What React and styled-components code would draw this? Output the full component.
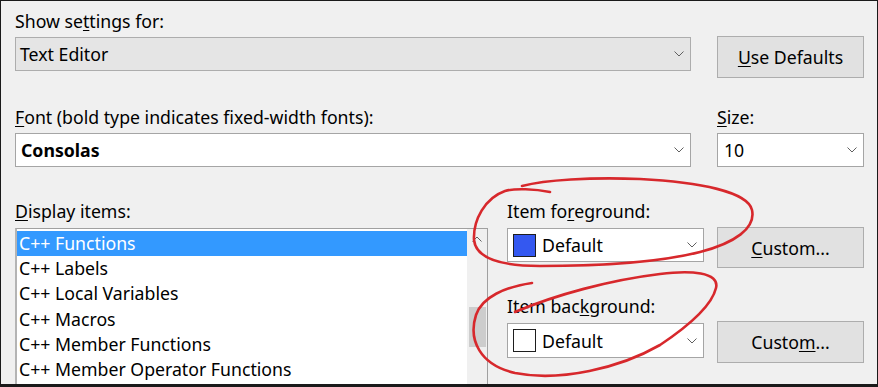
import React from 'react';
import styled, { createGlobalStyle } from 'styled-components';

const GlobalStyle = createGlobalStyle`
  html, body {
    margin: 0;
    padding: 0;
    background: #f0f0f0;
  }
  body {
    font-family: "Noto Sans", "Open Sans", sans-serif;
  }
`;

const Window = styled.div`
  position: relative;
  width: 878px;
  height: 387px;
  box-sizing: border-box;
  border: 1px solid #1a1a1a;
  border-bottom-width: 3px;
  background: #f0f0f0;
  overflow: hidden;
  padding: 7px 0 0 14px;
  font-size: 17.7px;
  color: #000;
`;

const TopGrid = styled.div`
  display: grid;
  grid-template-columns: 676px 147px;
  column-gap: 26px;
  row-gap: 2px;
  align-items: start;
`;

const Label = styled.div`
  height: 26px;
  line-height: 26px;
  white-space: nowrap;
  margin-top: ${p => p.$top || 0}px;
`;

const Key = styled.u`
  text-underline-offset: 2px;
  text-decoration-thickness: 1px;
`;

const Combo = styled.div`
  box-sizing: border-box;
  display: flex;
  align-items: center;
  height: ${p => p.$h || 34}px;
  margin-top: ${p => p.$top || 0}px;
  padding: 0 6px 0 ${p => p.$pad || 4}px;
  background: ${p => (p.$gray ? '#e5e5e5' : '#fff')};
  border: 1px solid ${p => (p.$gray ? '#adadad' : '#a5a5a5')};
  font-weight: ${p => (p.$bold ? 700 : 400)};
  white-space: nowrap;
`;

const ComboText = styled.span`
  flex: 1;
`;

const Swatch = styled.span`
  box-sizing: border-box;
  width: 23px;
  height: 23px;
  margin-right: 6px;
  border: 1px solid #1e1e1e;
  background: ${p => p.$color};
`;

const Button = styled.div`
  box-sizing: border-box;
  display: flex;
  align-items: center;
  justify-content: center;
  height: ${p => p.$h || 42}px;
  margin-top: ${p => p.$top || 0}px;
  background: #e1e1e1;
  border: 1px solid #adadad;
  white-space: nowrap;
`;

const Bottom = styled.div`
  display: flex;
  margin-top: 31px;
  gap: 19px;
`;

const LeftCol = styled.div`
  display: flex;
  flex-direction: column;
  width: 473px;
`;

const List = styled.div`
  display: flex;
  margin-top: 4px;
  height: 170px;
  box-sizing: border-box;
  border: 1px solid #a0a0a0;
  border-left: 2px solid #b4b4b4;
  background: #fff;
`;

const Items = styled.div`
  flex: 1;
  padding-top: 2px;
`;

const Item = styled.div`
  height: 25.2px;
  line-height: 25.2px;
  padding-left: 2px;
  white-space: nowrap;
  background: ${p => (p.$selected ? '#3399ff' : 'transparent')};
  color: ${p => (p.$selected ? '#fff' : '#000')};
`;

const Scrollbar = styled.div`
  width: 20px;
  display: flex;
  flex-direction: column;
  align-items: center;
  background: #f0f0f0;
`;

const ArrowBox = styled.div`
  height: 20px;
  display: flex;
  align-items: center;
  justify-content: center;
`;

const Thumb = styled.div`
  width: 17px;
  height: 40px;
  margin-top: 58px;
  background: #cdcdcd;
`;

const RightGrid = styled.div`
  display: grid;
  grid-template-columns: 197px 147px;
  column-gap: 13px;
  align-items: start;
  align-content: start;
`;

const Span2 = styled.div`
  grid-column: 1 / span 2;
  margin-top: ${p => p.$top || 0}px;
`;

const Annotations = styled.svg`
  position: absolute;
  left: -1px;
  top: -1px;
  pointer-events: none;
`;

const Chevron = ({ up }) => (
  <svg width="10" height="6" viewBox="0 0 10 6">
    <polyline
      points={up ? '0.5,5.5 5,1 9.5,5.5' : '0.5,0.5 5,5 9.5,0.5'}
      fill="none"
      stroke="#606060"
      strokeWidth="1"
    />
  </svg>
);

const items = [
  'C++ Functions',
  'C++ Labels',
  'C++ Local Variables',
  'C++ Macros',
  'C++ Member Functions',
  'C++ Member Operator Functions',
];

export default function App() {
  return (
    <>
      <GlobalStyle />
      <Window>
        <TopGrid>
          <Label>
            Show se<Key>t</Key>tings for:
          </Label>
          <div />
          <Combo $gray $top={1} $pad={4}>
            <ComboText>Text Editor</ComboText>
            <Chevron />
          </Combo>
          <Button>
            <Key>U</Key>se Defaults
          </Button>
          <Label $top={24}>
            <Key>F</Key>ont (bold type indicates fixed-width fonts):
          </Label>
          <Label $top={24}>
            <Key>S</Key>ize:
          </Label>
          <Combo $bold $top={1} $pad={5}>
            <ComboText>Consolas</ComboText>
            <Chevron />
          </Combo>
          <Combo $top={1} $pad={6}>
            <ComboText>10</ComboText>
            <Chevron />
          </Combo>
        </TopGrid>

        <Bottom>
          <LeftCol>
            <Label>
              <Key>D</Key>isplay items:
            </Label>
            <List>
              <Items>
                {items.map((t, i) => (
                  <Item key={t} $selected={i === 0}>
                    {t}
                  </Item>
                ))}
              </Items>
              <Scrollbar>
                <ArrowBox>
                  <Chevron up />
                </ArrowBox>
                <Thumb />
              </Scrollbar>
            </List>
          </LeftCol>

          <RightGrid>
            <Span2>
              <Label>
                Item fo<Key>r</Key>eground:
              </Label>
            </Span2>
            <Combo $top={4} $pad={5}>
              <Swatch $color="#3458f0" />
              <ComboText>Default</ComboText>
              <Chevron />
            </Combo>
            <Button $h={41} $top={3}>
              <Key>C</Key>ustom...
            </Button>
            <Span2 $top={25}>
              <Label>
                Item bac<Key>k</Key>ground:
              </Label>
            </Span2>
            <Combo $h={35} $top={4} $pad={5}>
              <Swatch $color="#fff" />
              <ComboText>Default</ComboText>
              <Chevron />
            </Combo>
            <Button $top={2}>
              Custo<Key>m</Key>...
            </Button>
          </RightGrid>
        </Bottom>

        <Annotations width="878" height="387" viewBox="0 0 878 387">
          <g fill="none" stroke="#d7282c" strokeWidth="2.6" strokeLinecap="round" strokeLinejoin="round">
            <path d="M550 192 C535 189 515 188 505 191 C485 198 473 220 474 240 C476 258 500 266 540 266 C600 266 660 262 700 252 C735 243 756 228 752 210 C748 192 700 182 640 179 C590 177 545 180 522 186" />
            <path d="M532 283 C505 287 482 297 476 315 C468 340 480 365 515 373 C560 382 620 368 660 345 C690 325 712 305 716 288 C720 272 690 270 660 274 C610 280 555 295 515 312" />
          </g>
        </Annotations>
      </Window>
    </>
  );
}
